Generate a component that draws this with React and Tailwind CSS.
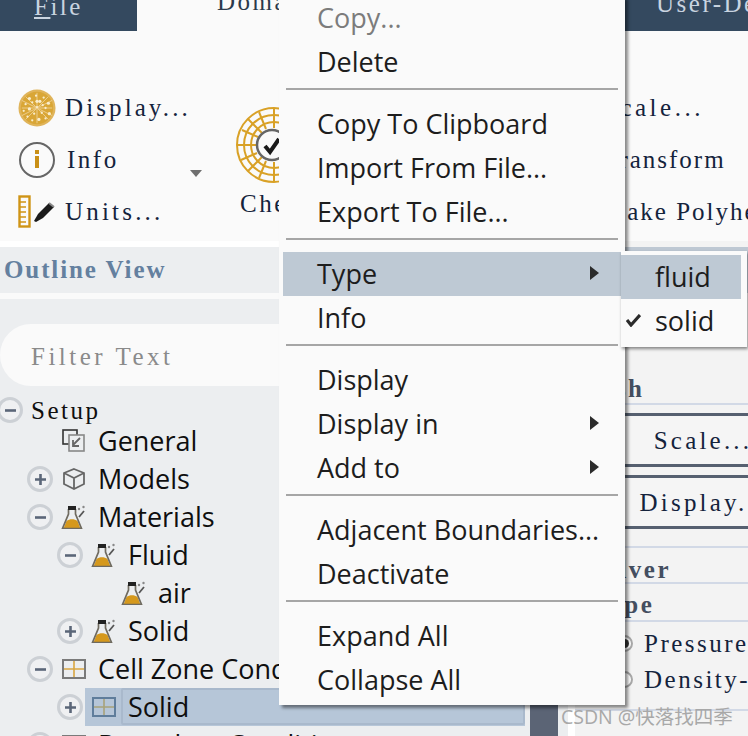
const serif = "font-['Liberation_Serif',serif] tracking-[2.5px]";

const meshDots = [
  [12, 10], [19, 7], [27, 9], [32, 15], [8, 16], [15, 14], [23, 13], [29, 20], [6, 23], [12, 21],
  [20, 19], [25, 25], [33, 26], [10, 29], [17, 26], [22, 32], [29, 31], [15, 33], [20, 13], [26, 17],
];

function DisplayIcon() {
  return (
    <svg width="38" height="38" viewBox="0 0 40 40">
      <circle cx="20" cy="20" r="19.5" fill="#e0b45a" />
      <circle cx="20" cy="20" r="17" fill="#d9a636" />
      <path d="M4 20h32M20 4v32M8 8l24 24M32 8L8 32M4 12l32 16M4 28l32-16" stroke="#edcf8f" strokeWidth="1" />
      {meshDots.map(([x, y], i) => (
        <circle key={i} cx={x} cy={y} r={i % 3 === 0 ? 1.7 : 1.2} fill="#f9edcd" />
      ))}
    </svg>
  );
}

function InfoIcon() {
  return (
    <svg width="38" height="38" viewBox="0 0 38 38">
      <circle cx="19" cy="19" r="17" fill="none" stroke="#666" strokeWidth="2" />
      <rect x="17" y="9" width="4" height="4" fill="#c98f16" />
      <rect x="17" y="15" width="4" height="12" fill="#c98f16" />
    </svg>
  );
}

function UnitsIcon() {
  return (
    <svg width="38" height="34" viewBox="0 0 38 34">
      <rect x="1.5" y="1.5" width="10" height="30" fill="none" stroke="#cf9416" strokeWidth="2.4" />
      <path d="M2 7h6M2 12h6M2 17h6M2 22h6M2 27h6" stroke="#cf9416" strokeWidth="1.6" />
      <path d="M16 26l4-7 11-11 5 4-11 11-7 4z" fill="#1b1b1b" />
      <path d="M31 8l5 4" stroke="#888" strokeWidth="2" />
    </svg>
  );
}

function CheckIcon() {
  return (
    <svg width="78" height="78" viewBox="0 0 78 78">
      <g fill="none" stroke="#d9a126" strokeWidth="2">
        <circle cx="39" cy="39" r="37" />
        <circle cx="39" cy="39" r="30" />
        <circle cx="39" cy="39" r="23" />
        <path d="M2 39h20M56 39h20M39 2v20M39 56v20M13 13l14 14M65 13L51 27M13 65l14-14M65 65L51 51M7 24l16 7M6 54l16-7M24 6l7 17M24 72l7-17" />
      </g>
      <circle cx="37" cy="39" r="15" fill="#fafafa" stroke="#666" strokeWidth="2.5" />
      <path d="M30 40l5 6 9-13" fill="none" stroke="#1a1a1a" strokeWidth="4" />
    </svg>
  );
}

function FlaskIcon() {
  return (
    <svg width="24" height="24" viewBox="0 0 24 24" className="ml-[-1px] shrink-0">
      <path d="M2.5 23.5l3-7.5c3-2.5 8-2.5 11 0l3 7.5z" fill="#d5981c" />
      <path d="M7.5 4v5L1.5 23.5h19L14.5 9V4" fill="none" stroke="#6f6a5f" strokeWidth="1.7" />
      <rect x="7" y="1" width="8" height="4" fill="#222" />
      <path d="M18 12l5-6" stroke="#555" strokeWidth="1.8" />
      <circle cx="18" cy="4" r="1.2" fill="#888" />
      <circle cx="22.5" cy="2" r="1.2" fill="#888" />
    </svg>
  );
}

function GridIcon({ selected }) {
  const line = selected ? "#5f7d9b" : "#7a7a7a";
  return (
    <svg width="24" height="20" viewBox="0 0 24 20" className="shrink-0">
      <rect x="1" y="1" width="22" height="18" fill="none" stroke={line} strokeWidth="2" />
      <path d="M12 2v16M2 10h20" stroke={selected ? "#a8a27a" : "#d9a641"} strokeWidth="1.6" />
    </svg>
  );
}

function CubeIcon() {
  return (
    <svg width="24" height="24" viewBox="0 0 24 24" className="shrink-0">
      <path d="M12 2l10 4v11l-10 5-10-5V6zM2 6l10 5 10-5M12 11v11" fill="none" stroke="#666" strokeWidth="1.8" />
    </svg>
  );
}

function GeneralIcon() {
  return (
    <svg width="24" height="24" viewBox="0 0 24 24" className="shrink-0">
      <rect x="1" y="1" width="14" height="14" fill="none" stroke="#333" strokeWidth="1.6" />
      <rect x="7" y="6" width="15" height="16" fill="#eceef0" stroke="#888" strokeWidth="1.6" />
      <path d="M18 9l-7 7M11 11v6h6" fill="none" stroke="#666" strokeWidth="1.8" />
    </svg>
  );
}

function Expander({ open }) {
  return (
    <span className="flex h-[26px] w-[26px] shrink-0 items-center justify-center rounded-full border-[3px] border-[#ccd0d5] bg-[#eff0f2]">
      <svg width="11" height="11" viewBox="0 0 11 11">
        <path d={open ? "M0 5.5h11" : "M0 5.5h11M5.5 0v11"} stroke="#5b6678" strokeWidth="2.6" />
      </svg>
    </span>
  );
}

function TreeRow({ depth, open, leaf, icon, label, selected }) {
  const pads = { 1: "pl-[27px]", 2: "pl-[57px]", 3: "pl-[96px]" };
  return (
    <div className={`flex h-[38px] items-center ${pads[depth]}`}>
      {leaf ? <span className="w-[26px] shrink-0" /> : <Expander open={open} />}
      <span className={`${depth === 3 ? "w-0" : "w-[9px]"} shrink-0`} />
      <div className={`flex h-full min-w-0 flex-1 items-center ${selected ? "relative" : ""}`}>
        {selected && <div className="absolute top-0 bottom-0 left-[-7px] right-[5px] bg-[#b6c6d8]" />}
        {selected && <div className="absolute top-0 bottom-[1px] left-[29px] right-[5px] border-[2px] border-[#a9b9cc] rounded-[2px]" />}
        <span className="relative flex w-[36px] shrink-0">{icon}</span>
        <span className="relative mt-[-2px] whitespace-nowrap text-[27px] text-[#0f0f0f] leading-none">{label}</span>
      </div>
    </div>
  );
}

function MenuItem({ label, disabled, active, arrow }) {
  return (
    <div className={`relative flex h-[44px] items-center pl-[34px] text-[27px] whitespace-nowrap ${disabled ? "text-[#7c7c7c]" : "text-[#1d1d1d]"} ${active ? "bg-[#bec9d4]" : ""}`}>
      {label}
      {arrow && (
        <svg width="9" height="14" viewBox="0 0 9 14" className="absolute right-[22px] top-[14px]">
          <path d="M0 0l9 7-9 7z" fill="#2b2b2b" />
        </svg>
      )}
    </div>
  );
}

function MenuSep() {
  return (
    <div className="h-[18px] px-[3px] pt-[4px]">
      <div className="h-[2px] bg-[#a6a6a6]" />
    </div>
  );
}

export default function App() {
  return (
    <div className="relative flex h-[736px] w-[748px] flex-col overflow-hidden bg-[#fafafa] font-['Open_Sans',sans-serif]">
      {/* tabs */}
      <div className={`flex h-[31px] shrink-0 overflow-hidden text-[25px] leading-none ${serif}`}>
        <div className="w-[137px] shrink-0 bg-[#34495f] pl-[34px] text-[#c9d4e0]">
          <span className="block mt-[-6px]"><u>F</u>ile</span>
        </div>
        <div className="w-[200px] shrink-0 pl-[80px] text-[#2b3a4d]">
          <span className="block mt-[-11px]">Domain</span>
        </div>
        <div className="w-[411px] shrink-0 bg-[#34495f] pl-[319px] text-[#c9d4e0]">
          <span className="block mt-[-9px] whitespace-nowrap">User-Defined</span>
        </div>
      </div>

      {/* ribbon */}
      <div className={`flex h-[210px] shrink-0 pl-[18px] text-[25px] leading-none text-[#14233c] ${serif}`}>
        <div className="flex w-[172px] shrink-0 flex-col pt-[51px]">
          <div className="flex h-[52px] items-center">
            <span className="flex w-[47px] shrink-0"><DisplayIcon /></span>
            <span className="mb-[2px] tracking-[3.1px]">Display...</span>
          </div>
          <div className="flex h-[52px] items-center">
            <span className="flex w-[49px] shrink-0"><InfoIcon /></span>
            <span className="mb-[2px]">Info</span>
          </div>
          <div className="flex h-[52px] items-center">
            <span className="flex w-[47px] shrink-0"><UnitsIcon /></span>
            <span className="mb-[2px] tracking-[3.2px]">Units...</span>
          </div>
        </div>
        <svg width="12" height="7" viewBox="0 0 12 7" className="mt-[139px] shrink-0">
          <path d="M0 0h12l-6 7z" fill="#6f6f6f" />
        </svg>
        <div className="ml-[33px] flex w-[368px] shrink-0 flex-col pt-[75px]">
          <CheckIcon />
          <span className="ml-[5px] mt-[7px]">Check</span>
        </div>
        <div className="flex flex-col pt-[51px] whitespace-nowrap">
          <div className="flex h-[52px] items-center pb-[2px] tracking-[3.5px]">Scale...</div>
          <div className="flex h-[52px] items-center pb-[2px] tracking-[2px]">Transform</div>
          <div className="flex h-[52px] items-center pb-[2px] tracking-[2px]">Make Polyhedra</div>
        </div>
      </div>

      {/* panels */}
      <div className="flex min-h-0 flex-1">
        <div className="flex w-[530px] shrink-0 flex-col">
          <div className="h-[6px] shrink-0 bg-white" />
          <div className={`flex h-[46px] shrink-0 items-center bg-[#eceef0] pl-[4px] text-[25px] font-bold text-[#64809f] ${serif}`}>
            <span className="tracking-[1.9px]">Outline View</span>
          </div>
          <div className="h-[6px] shrink-0 bg-[#fafafa]" />
          <div className="flex-1 bg-[#eceef0] pt-[25px]">
            <div className={`flex h-[62px] items-center rounded-l-[31px] bg-[#fafafa] pl-[31px] pt-[3px] text-[25px] text-[#8a8a8a] ${serif}`}>
              <span className="tracking-[3.5px]">Filter Text</span>
            </div>
            <div className={`mt-[12px] flex h-[24px] items-center text-[25px] text-[#0f0f0f] ${serif}`}>
              <span className="ml-[-3px] mr-[8px] flex shrink-0"><Expander open /></span>
              <span className="mt-[2px]">Setup</span>
            </div>
            <TreeRow depth={1} leaf icon={<GeneralIcon />} label="General" />
            <TreeRow depth={1} icon={<CubeIcon />} label="Models" />
            <TreeRow depth={1} open icon={<FlaskIcon />} label="Materials" />
            <TreeRow depth={2} open icon={<FlaskIcon />} label="Fluid" />
            <TreeRow depth={3} leaf icon={<FlaskIcon />} label="air" />
            <TreeRow depth={2} icon={<FlaskIcon />} label="Solid" />
            <TreeRow depth={1} open icon={<GridIcon />} label="Cell Zone Conditions" />
            <TreeRow depth={2} selected icon={<GridIcon selected />} label="Solid" />
            <TreeRow depth={1} icon={<GridIcon />} label="Boundary Conditions" />
          </div>
        </div>

        {/* scrollbar */}
        <div className="w-[28px] shrink-0 bg-[#5b6475]" />
        <div className="w-[10px] shrink-0 bg-[#eceef0]" />
        <div className="w-[7px] shrink-0 bg-white" />

        {/* right panel */}
        <div className={`w-[300px] shrink-0 bg-[#f3f3f3] text-[25px] leading-none ${serif}`}>
          <div className="mt-[6px] h-[46px] bg-[#bec8d3]" />
          <div className="ml-[1px] flex h-[110px] items-end pb-[2px] font-bold text-[#444e60]">Mesh</div>
          <div className="h-[2px] bg-[#d2d9e6]" />
          <div className="ml-[14px] mt-[8px] flex h-[54px] w-[228px] items-center justify-center border-y-[3px] border-[#566070] bg-[#f5f5f5] tracking-[3.2px] text-[#14233c]">Scale...</div>
          <div className="ml-[14px] mt-[8px] flex h-[54px] w-[228px] items-center justify-center border-y-[3px] border-[#566070] bg-[#f5f5f5] tracking-[3.2px] text-[#14233c]">Display...</div>
          <div className="mt-[17px] h-[2px] bg-[#d2d9e6]" />
          <div className="flex h-[34px] items-end pl-[13px] font-bold text-[#444e60]">Solver</div>
          <div className="h-[2px] bg-[#d2d9e6]" />
          <div className="flex h-[36px] items-end pb-[3px] pl-[17px] font-bold text-[#444e60]">Type</div>
          <div className="h-[2px] bg-[#d2d9e6]" />
          <div className="flex h-[36px] items-center pl-[42px] pt-[6px] text-[#14233c]">
            <span className="ml-[-1px] mr-[11px] flex h-[17px] w-[17px] shrink-0 items-center justify-center rounded-full border-[2px] border-[#a8a8a8] bg-white">
              <span className="h-[9px] w-[9px] rounded-full bg-[#333]" />
            </span>
            Pressure-Based
          </div>
          <div className="flex h-[36px] items-center pl-[42px] pt-[6px] text-[#14233c]">
            <span className="ml-[-1px] mr-[11px] h-[17px] w-[17px] shrink-0 rounded-full border-[2px] border-[#a8a8a8] bg-white" />
            Density-Based
          </div>
          <div className="mt-[15px] h-[2px] bg-[#d2d9e6]" />
        </div>
      </div>

      {/* context menu */}
      <div className="absolute left-[279px] top-[-4px] w-[346px] bg-[#fafafa] px-[4px] pb-[3px] shadow-[3px_3px_3px_rgba(0,0,0,0.45)]">
        <MenuItem label="Copy..." disabled />
        <MenuItem label="Delete" />
        <MenuSep />
        <MenuItem label="Copy To Clipboard" />
        <MenuItem label="Import From File..." />
        <MenuItem label="Export To File..." />
        <MenuSep />
        <MenuItem label="Type" active arrow />
        <MenuItem label="Info" />
        <MenuSep />
        <MenuItem label="Display" />
        <MenuItem label="Display in" arrow />
        <MenuItem label="Add to" arrow />
        <MenuSep />
        <MenuItem label="Adjacent Boundaries..." />
        <MenuItem label="Deactivate" />
        <MenuSep />
        <MenuItem label="Expand All" />
        <MenuItem label="Collapse All" />
      </div>

      {/* type submenu */}
      <div className="absolute left-[621px] top-[251px] w-[126px] bg-[#fafafa] pt-[4px] pb-[4px] shadow-[1px_2px_3px_rgba(0,0,0,0.45)]">
        <div className="mr-[6px] flex h-[44px] items-center bg-[#bec9d4] pl-[34px] text-[27px] text-[#1d1d1d]">fluid</div>
        <div className="relative flex h-[44px] items-center pl-[34px] text-[27px] text-[#1d1d1d]">
          <svg width="15" height="13" viewBox="0 0 15 13" className="absolute left-[5px] top-[15px]">
            <path d="M1 6l4 5 9-10" fill="none" stroke="#2b2b2b" strokeWidth="3.2" />
          </svg>
          solid
        </div>
      </div>

      {/* watermark */}
      <div className="absolute left-[561px] top-[705px] whitespace-nowrap text-[19.5px] leading-[24px] text-[#a8a8a8] font-['Open_Sans','Noto_Sans_CJK_SC',sans-serif]">
        CSDN @快落找四季
      </div>
    </div>
  );
}
